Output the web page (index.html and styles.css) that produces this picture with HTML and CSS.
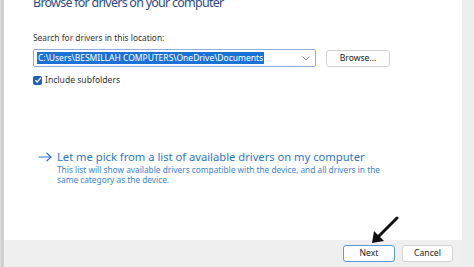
FILE: index.html
```html
<!DOCTYPE html>
<html lang="en">
<head>
    <meta charset="UTF-8" />
    <meta name="viewport" content="width=device-width, initial-scale=1.0" />
    <title>Update Drivers</title>
    <link rel="stylesheet" href="styles.css">
</head>
<body>
    <div class="side-strip"></div>
    <main class="dialog">
        <section class="dialog-body">
            <h2 class="dialog-title">Browse for drivers on your computer</h2>
            <p class="field-label">Search for drivers in this location:</p>
            <div class="path-row">
                <div class="path-combo">
                    <span class="path-text">C:\Users\BESMILLAH COMPUTERS\OneDrive\Documents</span>
                    <svg class="chevron" width="8" height="5" viewBox="0 0 8 5">
                        <path d="M0.5 0.5 L4 4 L7.5 0.5" fill="none" stroke="#8a8a8a" stroke-width="1" />
                    </svg>
                </div>
                <button class="btn btn-browse">Browse...</button>
            </div>
            <label class="check-row">
                <span class="check-box">
                    <svg width="8" height="8" viewBox="0 0 8 8">
                        <path d="M1.3 4.2 L3.2 6 L6.8 1.8" fill="none" stroke="#ffffff" stroke-width="1.3" />
                    </svg>
                </span>
                Include subfolders
            </label>
            <div class="pick-link">
                <svg class="pick-arrow" width="14" height="10" viewBox="0 0 14 10">
                    <path d="M0.5 5 H13 M8.5 0.8 L13 5 L8.5 9.2" fill="none" stroke="#2a78cc" stroke-width="1.2" />
                </svg>
                <div class="pick-text">
                    <p class="pick-title">Let me pick from a list of available drivers on my computer</p>
                    <p class="pick-desc">This list will show available drivers compatible with the device, and all drivers in the same category as the device.</p>
                </div>
            </div>
        </section>
        <footer class="dialog-footer">
            <button class="btn btn-next">Next</button>
            <button class="btn btn-cancel">Cancel</button>
        </footer>
        <svg class="pointer-arrow" width="30" height="30" viewBox="0 0 30 30">
            <path d="M27 2 L6 23" stroke="#111111" stroke-width="3" stroke-linecap="round" />
            <path d="M2 27 L4 15 L14 25 Z" fill="#111111" />
        </svg>
    </main>
</body>
</html>
```

FILE: styles.css
```css
body {
    margin: 0;
    height: 267px;
    display: flex;
    background: linear-gradient(to right, #dcdcdc, #ebebeb 4px, #eeeeee);
    font-family: "Noto Sans", "Open Sans", sans-serif;
    overflow: hidden;
}
.side-strip {
    width: 4px;
    flex: none;
    background: linear-gradient(to right, #e4e4e4, #c9c9c9 2px, #d8d8d8);
}
.dialog {
    position: relative;
    width: 458px;
    flex: none;
    background-color: #ffffff;
    display: flex;
    flex-direction: column;
}
.dialog-body {
    flex: 1;
    padding-left: 29px;
}
.dialog-title {
    margin: -6px 0 0;
    font-size: 12.5px;
    letter-spacing: -0.75px;
    font-weight: normal;
    color: #2c4a86;
    line-height: 17px;
}
.field-label {
    margin: 21px 0 0;
    font-size: 8.4px;
    line-height: 12px;
    color: #333333;
}
.path-row {
    display: flex;
    align-items: center;
    margin-top: 5px;
}
.path-combo {
    width: 273px;
    height: 16px;
    border: 1px solid #8fb0d6;
    border-radius: 2px;
    display: flex;
    align-items: center;
    justify-content: space-between;
    padding: 0 5px 0 3px;
}
.path-text {
    background-color: #1a73d4;
    color: #ffffff;
    font-size: 8.5px;
    line-height: 12px;
    padding: 0 1px;
    white-space: nowrap;
}
.btn {
    font-family: inherit;
    font-size: 8.6px;
    color: #222222;
    background-color: #fdfdfd;
    border: 1px solid #d3d3d3;
    border-radius: 3px;
    padding: 0;
    height: 17px;
    line-height: 15px;
}
.btn-browse {
    width: 64px;
    margin-left: 10px;
}
.check-row {
    display: flex;
    align-items: center;
    gap: 3px;
    margin-top: 7px;
    font-size: 8.6px;
    line-height: 12px;
    color: #333333;
}
.check-box {
    width: 9px;
    height: 9px;
    border-radius: 2px;
    background-color: #1f5fb5;
    display: flex;
    align-items: center;
    justify-content: center;
}
.pick-link {
    display: flex;
    align-items: flex-start;
    margin-top: 63px;
    padding-left: 5px;
    color: #2a78cc;
}
.pick-arrow {
    flex: none;
    margin-top: 3px;
    margin-right: 5px;
}
.pick-title {
    margin: 0;
    font-size: 11.2px;
    line-height: 15px;
}
.pick-desc {
    margin: 1px 0 0;
    width: 330px;
    font-size: 8.3px;
    line-height: 10px;
    color: #3c84d0;
}
.dialog-footer {
    height: 27px;
    background-color: #efefef;
    display: flex;
    align-items: center;
    justify-content: flex-end;
    gap: 7px;
    padding-right: 9px;
}
.btn-next {
    width: 52px;
    border-color: #5b9bd5;
}
.btn-cancel {
    width: 51px;
}
.pointer-arrow {
    position: absolute;
    left: 366px;
    top: 216px;
}
```
